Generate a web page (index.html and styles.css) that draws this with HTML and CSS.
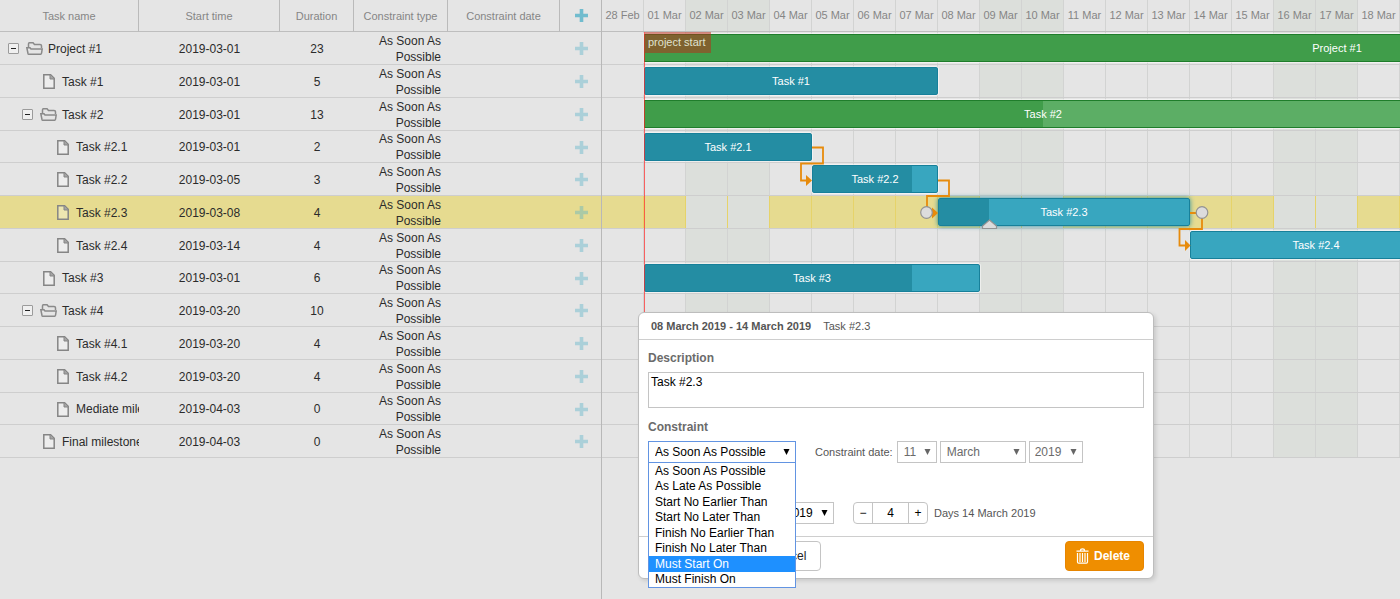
FILE: index.html
```html
<!DOCTYPE html>
<html lang="en">
<head>
    <meta charset="UTF-8">
    <title>Gantt - Task constraints</title>
    <link rel="stylesheet" href="styles.css">
</head>
<body>
    <svg class="sprite" aria-hidden="true">
        <symbol id="folder" viewBox="0 0 17 13">
            <path d="M2.5 5.5V2Q2.5 .7 3.5 .7H7L8.500 2.500H14Q15.500 2.500 15.500 3.800V6M.8 5.700H4L5 7H16.200L15.500 11.300Q15.400 12.300 14.400 12.300H3Q2.200 12.300 2 11.500Z" fill="none" stroke="#8a8a8a" stroke-width="1.500"/>
        </symbol>
        <symbol id="file" viewBox="0 0 12 15">
            <path d="M.8 .8H7.600L11.200 4.400V14.200H.8Z" fill="#fff" fill-opacity=".3" stroke="#858585" stroke-width="1.500"/>
            <path d="M7 1V5H11" fill="#a5a5a5" stroke="#858585"/>
        </symbol>
        <symbol id="plus" viewBox="0 0 13 13">
            <path d="M6.500 0V13M0 6.500H13" stroke="#55b3c9" stroke-width="3.600"/>
        </symbol>
    </svg>

    <main class="gantt">
        <table class="grid">
            <colgroup>
                <col class="col-name"><col class="col-start"><col class="col-duration">
                <col class="col-type"><col class="col-date"><col class="col-add">
            </colgroup>
            <thead>
                <tr>
                    <th>Task name</th><th>Start time</th><th>Duration</th><th>Constraint type</th><th>Constraint date</th>
                    <th><button class="add" aria-label="Add task"><svg><use href="#plus"/></svg></button></th>
                </tr>
            </thead>
            <tbody>
                <tr>
                    <td><div class="name"><button class="toggle" aria-label="Collapse"></button><svg class="folder"><use href="#folder"/></svg>Project #1</div></td>
                    <td>2019-03-01</td><td>23</td><td class="type">As Soon As Possible</td><td></td>
                    <td><button class="add" aria-label="Add task"><svg><use href="#plus"/></svg></button></td>
                </tr>
                <tr>
                    <td><div class="name level-1 leaf"><svg class="file"><use href="#file"/></svg>Task #1</div></td>
                    <td>2019-03-01</td><td>5</td><td class="type">As Soon As Possible</td><td></td>
                    <td><button class="add" aria-label="Add task"><svg><use href="#plus"/></svg></button></td>
                </tr>
                <tr>
                    <td><div class="name level-1"><button class="toggle" aria-label="Collapse"></button><svg class="folder"><use href="#folder"/></svg>Task #2</div></td>
                    <td>2019-03-01</td><td>13</td><td class="type">As Soon As Possible</td><td></td>
                    <td><button class="add" aria-label="Add task"><svg><use href="#plus"/></svg></button></td>
                </tr>
                <tr>
                    <td><div class="name level-2 leaf"><svg class="file"><use href="#file"/></svg>Task #2.1</div></td>
                    <td>2019-03-01</td><td>2</td><td class="type">As Soon As Possible</td><td></td>
                    <td><button class="add" aria-label="Add task"><svg><use href="#plus"/></svg></button></td>
                </tr>
                <tr>
                    <td><div class="name level-2 leaf"><svg class="file"><use href="#file"/></svg>Task #2.2</div></td>
                    <td>2019-03-05</td><td>3</td><td class="type">As Soon As Possible</td><td></td>
                    <td><button class="add" aria-label="Add task"><svg><use href="#plus"/></svg></button></td>
                </tr>
                <tr class="selected">
                    <td><div class="name level-2 leaf"><svg class="file"><use href="#file"/></svg>Task #2.3</div></td>
                    <td>2019-03-08</td><td>4</td><td class="type">As Soon As Possible</td><td></td>
                    <td><button class="add" aria-label="Add task"><svg><use href="#plus"/></svg></button></td>
                </tr>
                <tr>
                    <td><div class="name level-2 leaf"><svg class="file"><use href="#file"/></svg>Task #2.4</div></td>
                    <td>2019-03-14</td><td>4</td><td class="type">As Soon As Possible</td><td></td>
                    <td><button class="add" aria-label="Add task"><svg><use href="#plus"/></svg></button></td>
                </tr>
                <tr>
                    <td><div class="name level-1 leaf"><svg class="file"><use href="#file"/></svg>Task #3</div></td>
                    <td>2019-03-01</td><td>6</td><td class="type">As Soon As Possible</td><td></td>
                    <td><button class="add" aria-label="Add task"><svg><use href="#plus"/></svg></button></td>
                </tr>
                <tr>
                    <td><div class="name level-1"><button class="toggle" aria-label="Collapse"></button><svg class="folder"><use href="#folder"/></svg>Task #4</div></td>
                    <td>2019-03-20</td><td>10</td><td class="type">As Soon As Possible</td><td></td>
                    <td><button class="add" aria-label="Add task"><svg><use href="#plus"/></svg></button></td>
                </tr>
                <tr>
                    <td><div class="name level-2 leaf"><svg class="file"><use href="#file"/></svg>Task #4.1</div></td>
                    <td>2019-03-20</td><td>4</td><td class="type">As Soon As Possible</td><td></td>
                    <td><button class="add" aria-label="Add task"><svg><use href="#plus"/></svg></button></td>
                </tr>
                <tr>
                    <td><div class="name level-2 leaf"><svg class="file"><use href="#file"/></svg>Task #4.2</div></td>
                    <td>2019-03-20</td><td>4</td><td class="type">As Soon As Possible</td><td></td>
                    <td><button class="add" aria-label="Add task"><svg><use href="#plus"/></svg></button></td>
                </tr>
                <tr>
                    <td><div class="name level-2 leaf"><svg class="file"><use href="#file"/></svg>Mediate milestone</div></td>
                    <td>2019-04-03</td><td>0</td><td class="type">As Soon As Possible</td><td></td>
                    <td><button class="add" aria-label="Add task"><svg><use href="#plus"/></svg></button></td>
                </tr>
                <tr>
                    <td><div class="name level-1 leaf"><svg class="file"><use href="#file"/></svg>Final milestone</div></td>
                    <td>2019-04-03</td><td>0</td><td class="type">As Soon As Possible</td><td></td>
                    <td><button class="add" aria-label="Add task"><svg><use href="#plus"/></svg></button></td>
                </tr>
            </tbody>
        </table>

        <section class="chart">
            <div class="scale">
                <span>28 Feb</span><span>01 Mar</span><span class="weekend">02 Mar</span><span class="weekend">03 Mar</span>
                <span>04 Mar</span><span>05 Mar</span><span>06 Mar</span><span>07 Mar</span><span>08 Mar</span>
                <span class="weekend">09 Mar</span><span class="weekend">10 Mar</span><span>11 Mar</span><span>12 Mar</span>
                <span>13 Mar</span><span>14 Mar</span><span>15 Mar</span><span class="weekend">16 Mar</span>
                <span class="weekend">17 Mar</span><span>18 Mar</span>
            </div>

            <div class="timeline">
                <div class="line"><div class="bar project" style="grid-column: 2 / span 33; --progress: 100%">Project #1</div></div>
                <div class="line"><div class="bar" style="grid-column: 2 / span 7; --progress: 100%">Task #1</div></div>
                <div class="line"><div class="bar project" style="grid-column: 2 / span 19; --progress: 50%">Task #2</div></div>
                <div class="line"><div class="bar" style="grid-column: 2 / span 4; --progress: 100%">Task #2.1</div></div>
                <div class="line"><div class="bar" style="grid-column: 6 / span 3; --progress: 80%">Task #2.2</div></div>
                <div class="line selected"><div class="bar active" style="grid-column: 9 / span 6; --progress: 20%">Task #2.3</div></div>
                <div class="line"><div class="bar" style="grid-column: 15 / span 6; --progress: 0%">Task #2.4</div></div>
                <div class="line"><div class="bar" style="grid-column: 2 / span 8; --progress: 80%">Task #3</div></div>
                <div class="line"></div>
                <div class="line"></div>
                <div class="line"></div>
                <div class="line"></div>
                <div class="line"></div>

                <!-- dependency links and drag handles -->
                <svg class="links" aria-hidden="true">
                    <g fill="none" stroke="#e78b0c" stroke-width="1.800">
                        <path d="M210 115.500H221V131.500H199V148.500H205"/>
                        <path d="M336 148.500H347V164H325V181H331"/>
                        <path d="M588 181H600V197H577.500V213.500H583"/>
                    </g>
                    <g fill="#e78b0c">
                        <path d="M204 143L210 148.500L204 154Z"/>
                        <path d="M330 175.500L336 181L330 186.500Z"/>
                        <path d="M583 208L588.500 213.500L583 219Z"/>
                    </g>
                    <g fill="#dcdcdc" stroke="#939393" stroke-width="1.200">
                        <circle cx="324.500" cy="180.500" r="5.800"/>
                        <circle cx="600" cy="180.500" r="5.800"/>
                        <path d="M387.500 188L394.500 194V196.500H380.500V194Z"/>
                    </g>
                </svg>

                <div class="marker"><span>project start</span></div>
            </div>

            <form class="lightbox">
                <header><b>08 March 2019 - 14 March 2019</b><span>Task #2.3</span></header>
                <div class="sections">
                    <label class="title" for="description">Description</label>
                    <textarea id="description">Task #2.3</textarea>

                    <label class="title" for="constraint">Constraint</label>
                    <div class="fields">
                        <div class="dropdown">
                            <select id="constraint"><option>As Soon As Possible</option></select>
                            <ul role="listbox" aria-label="Constraint">
                                <li role="option">As Soon As Possible</li>
                                <li role="option">As Late As Possible</li>
                                <li role="option">Start No Earlier Than</li>
                                <li role="option">Start No Later Than</li>
                                <li role="option">Finish No Earlier Than</li>
                                <li role="option">Finish No Later Than</li>
                                <li role="option" class="hover" aria-selected="true">Must Start On</li>
                                <li role="option">Must Finish On</li>
                            </ul>
                        </div>
                        <label for="constraint-day">Constraint date:</label>
                        <div class="date">
                            <select id="constraint-day" class="day" disabled><option>11</option></select>
                            <select class="month" aria-label="Constraint month" disabled><option>March</option></select>
                            <select class="year" aria-label="Constraint year" disabled><option>2019</option></select>
                        </div>
                    </div>

                    <div class="fields time">
                        <div class="date">
                            <select class="day" aria-label="Start day"><option>8</option></select>
                            <select class="month" aria-label="Start month"><option>March</option></select>
                            <select class="year" aria-label="Start year"><option>2019</option></select>
                        </div>
                        <div class="duration">
                            <button type="button" aria-label="Decrease">−</button>
                            <input type="text" value="4" aria-label="Duration">
                            <button type="button" aria-label="Increase">+</button>
                        </div>
                        <span class="period">Days 14 March 2019</span>
                    </div>
                </div>
                <footer>
                    <button type="button" class="btn cancel">Cancel</button>
                    <button type="button" class="btn delete">
                        <svg viewBox="0 0 13 16" aria-hidden="true">
                            <path d="M4.500 2.500Q4.500 .8 6.500 .8T8.500 2.500M.5 3.200H12.500" fill="none" stroke="#fff" stroke-width="1.300"/>
                            <path d="M1.500 5V14Q1.500 15.200 2.700 15.200H10.300Q11.500 15.200 11.500 14V5M4 5V14M6.500 5V14M9 5V14" fill="none" stroke="#fff" stroke-width="1.200"/>
                        </svg>
                        Delete
                    </button>
                </footer>
            </form>
        </section>
    </main>
</body>
</html>
```

FILE: styles.css
```css
* { box-sizing: border-box; }
body {
    margin: 0;
    background: #e5e5e5;
    color: #2b2b2b;
    font: 12px/16px Arial, "Liberation Sans", sans-serif;
}
button, input, select, textarea { font: inherit; color: inherit; margin: 0; }
.sprite { display: none; }

.gantt {
    display: flex;
    align-items: stretch;
    min-height: 100vh;
    overflow: hidden;
}

/* grid */
.grid {
    flex: none;
    align-self: flex-start;
    width: 602px;
    table-layout: fixed;
    border-collapse: separate;
    border-spacing: 0;
}
.col-name { width: 139px; }
.col-start { width: 141px; }
.col-duration { width: 74px; }
.col-type { width: 94px; }
.col-date { width: 112px; }
.col-add { width: 42px; }
th {
    height: 32px;
    padding: 0;
    border-right: 1px solid #bababa;
    border-bottom: 1px solid #bebebe;
    color: #858585;
    font-size: 11px;
    font-weight: normal;
}
th:last-child { border-right: 0; }
td { padding: 0; text-align: center; }
tbody tr { height: 33px; box-shadow: inset 0 -1px #cecece; }
tbody tr:nth-child(4n) { height: 32px; }
tr.selected { background: #e6db90; }
.type { padding-right: 7px; padding-left: 7px; text-align: right; vertical-align: bottom; }
.name {
    display: flex;
    align-items: center;
    padding-left: 8px;
    overflow: hidden;
    white-space: nowrap;
}
.name.level-1 { padding-left: 22px; }
.name.level-2 { padding-left: 36px; }
.name.leaf::before { content: ""; flex: none; width: 21px; }
.toggle {
    display: flex;
    align-items: center;
    justify-content: center;
    flex: none;
    width: 11px;
    height: 11px;
    margin-right: 7px;
    padding: 0;
    border: 1px solid #9b9b9b;
    border-radius: 1px;
    background: #f0f0f0;
}
.toggle::before { content: ""; width: 5px; height: 1px; background: #222; }
.folder { flex: none; width: 17px; height: 13px; margin-right: 5px; }
.file { flex: none; width: 12px; height: 15px; margin-right: 7px; }
.add { display: block; margin: 0 auto; padding: 0; border: 0; background: none; }
.add svg { display: block; width: 13px; height: 13px; opacity: .8; }
td .add svg { opacity: .4; }

/* chart */
.chart {
    position: relative;
    flex: 1;
    min-width: 0;
    box-shadow: -1px 0 #b8b8b8;
}
.scale {
    display: grid;
    grid-template-columns: repeat(19, 42px);
    height: 32px;
    overflow: hidden;
    border-bottom: 1px solid #bebebe;
}
.scale span {
    border-right: 1px solid #d2d3d2;
    color: #858585;
    font-size: 11px;
    line-height: 31px;
    text-align: center;
    white-space: nowrap;
}
.scale .weekend { background: #dcdfdb; }
.timeline { position: relative; overflow: hidden; }
.line {
    --cell: #e5e5e5;
    --cell-border: #d2d3d2;
    display: grid;
    grid-template-columns: repeat(34, 42px);
    align-items: start;
    height: 33px;
    padding-top: 2px;
    background:
        linear-gradient(#cecece, #cecece) 0 100% / 100% 1px no-repeat,
        repeating-linear-gradient(to right, transparent 0 41px, var(--cell-border) 41px 42px),
        repeating-linear-gradient(to right, var(--cell) 0 84px, #dcdfdb 84px 168px, var(--cell) 168px 294px);
}
.line:nth-child(4n) { height: 32px; }
.line.selected { --cell: #e6db90; --cell-border: #e6d36a; }
.bar {
    --done: #248da3;
    --rest: #38a6bf;
    height: 28px;
    border: 1px solid #17809a;
    border-radius: 2px;
    background: linear-gradient(to right, var(--done) var(--progress), var(--rest) var(--progress));
    box-shadow: 0 0 0 1px rgba(255, 255, 255, .5);
    color: #fff;
    font-size: 11px;
    line-height: 27px;
    text-align: center;
}
.bar.project {
    --done: #409d4a;
    --rest: #5cae65;
    border-color: #1f7d2b;
    border-radius: 0;
}
.bar.active { box-shadow: 0 0 5px #248da3; }
.links {
    position: absolute;
    top: 0;
    left: 0;
    width: 100%;
    height: 100%;
    pointer-events: none;
}
.marker {
    position: absolute;
    top: 0;
    bottom: 0;
    left: 42px;
    border-left: 1px solid rgba(255, 40, 40, .7);
}
.marker span {
    display: block;
    height: 21px;
    padding: 0 6px 0 3px;
    background: rgba(190, 40, 20, .5);
    color: #dfe3d0;
    font-size: 11px;
    line-height: 21px;
    white-space: nowrap;
}

/* lightbox */
.lightbox {
    position: absolute;
    top: 312px;
    left: 36px;
    width: 516px;
    border: 1px solid #bdbdbd;
    border-radius: 6px;
    background: #fff;
    box-shadow: 2px 2px 4px rgba(0, 0, 0, .12);
    color: #555;
    font-size: 11px;
}
.lightbox header {
    display: flex;
    gap: 12px;
    padding: 5px 12px;
    border-bottom: 1px solid #cecece;
}
.sections { padding: 0 9px 12px; }
.title {
    display: block;
    padding: 10px 0 6px;
    color: #6b6b6b;
    font-size: 12px;
    font-weight: bold;
}
.sections textarea {
    display: block;
    width: 100%;
    height: 36px;
    margin-bottom: 1px;
    padding: 1px 2px;
    border: 1px solid #c4c4c4;
    color: #000;
    font-size: 12px;
    resize: none;
}
.fields { display: flex; align-items: center; }
.time { margin-top: 39px; }
.date { display: flex; gap: 3px; }
select {
    height: 22px;
    padding: 0 0 0 6px;
    border: 1px solid #c4c4c4;
    border-radius: 0;
    appearance: none;
    background: #fff url("data:image/svg+xml,%3Csvg xmlns='http://www.w3.org/2000/svg' width='7' height='6'%3E%3Cpath d='M0.5 0H6.5L3.5 6Z'/%3E%3C/svg%3E") no-repeat right 5px top 7px;
    color: #000;
    font-size: 12px;
}
select:disabled { opacity: 1; color: #6b6b6b; background-image: url("data:image/svg+xml,%3Csvg xmlns='http://www.w3.org/2000/svg' width='7' height='6'%3E%3Cpath fill='%23666' d='M0.5 0H6.5L3.5 6Z'/%3E%3C/svg%3E"); }
.day { width: 40px; }
.month { width: 86px; }
.year { width: 54px; padding-left: 5px; }
.dropdown { position: relative; width: 148px; margin-right: 19px; }
.dropdown + label { margin-right: 4px; }
.dropdown select { display: block; width: 100%; border-color: #6294e2; }
.dropdown ul {
    position: absolute;
    z-index: 1;
    top: 21px;
    left: 0;
    width: 100%;
    margin: 0;
    padding: 0;
    border: 1px solid #6294e2;
    background: #fff;
    color: #000;
    font-size: 12px;
    list-style: none;
}
.dropdown li { height: 16px; padding-left: 6px; line-height: 16px; }
.dropdown li:nth-child(even) { height: 15px; line-height: 15px; }
.dropdown .hover { background: #1e90ff; color: #fff; }
.duration {
    display: flex;
    width: 75px;
    height: 22px;
    margin: 0 6px 0 19px;
    border: 1px solid #c4c4c4;
    border-radius: 4px;
    color: #000;
    font-size: 12px;
}
.duration button { width: 18px; padding: 0; border: 0; background: none; }
.duration input {
    flex: 1;
    min-width: 0;
    padding: 0;
    border: solid #c4c4c4;
    border-width: 0 1px;
    text-align: center;
}
.lightbox footer {
    display: flex;
    justify-content: space-between;
    padding: 4px 9px 7px 115px;
    border-top: 1px solid #cecece;
}
.btn {
    height: 30px;
    padding: 0 14px;
    border: 1px solid #c4c4c4;
    border-radius: 4px;
    background: #fff;
    color: #222;
    font-size: 12px;
}
.btn.delete {
    display: flex;
    align-items: center;
    gap: 5px;
    padding: 0 13px 0 10px;
    border-color: #e78500;
    background: #ef8e00;
    color: #fff;
    font-weight: bold;
}
.delete svg { width: 13px; height: 16px; }
```
